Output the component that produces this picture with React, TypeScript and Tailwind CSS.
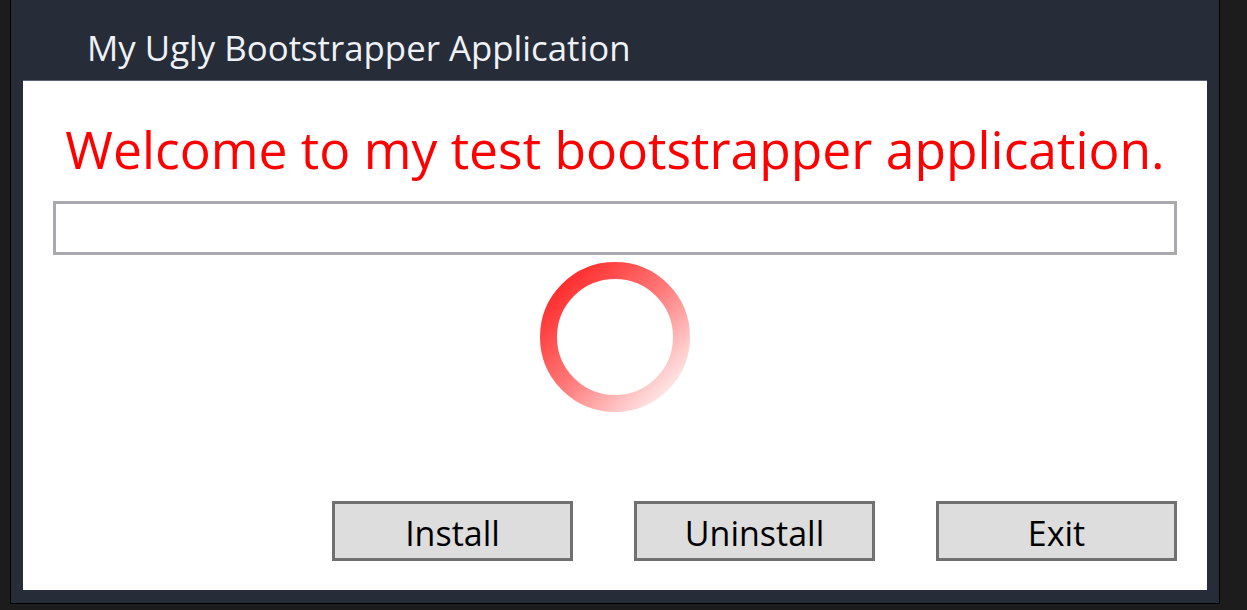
import React from "react";

const FONT = { fontFamily: '"Open Sans", "Noto Sans", sans-serif' };

function Spinner() {
  return (
    <svg width="152" height="152" viewBox="0 0 152 152">
      <defs>
        <linearGradient id="spin" x1="0" y1="0" x2="1" y2="1">
          <stop offset="0" stopColor="#ff1a1a" />
          <stop offset="0.5" stopColor="#ff7a7a" />
          <stop offset="1" stopColor="#ffffff" />
        </linearGradient>
      </defs>
      <circle cx="76" cy="76" r="66.5" fill="none" stroke="url(#spin)" strokeWidth="17" />
    </svg>
  );
}

function Button({ label }: { label: string }) {
  return (
    <button className="w-[241px] h-[60px] border-[3px] border-[#707070] bg-[#dddddd] text-[34px] text-black leading-none pt-[3px]">
      {label}
    </button>
  );
}

export default function App() {
  return (
    <div className="w-[1247px] h-[610px] bg-[#1c1c1c] pl-[10px] overflow-hidden" style={FONT}>
      <div className="w-[1210px] h-[604px] bg-[#262c38] border-x border-b border-black flex flex-col">
        {/* Title bar */}
        <div className="h-[80px] pl-[76px] pt-[28px]">
          <h1 className="text-[34.8px] leading-[40px] text-[#eef2f7]">My Ugly Bootstrapper Application</h1>
        </div>

        {/* Content */}
        <div className="mx-[12px] h-[510px] bg-white border-t border-[#5b6477] flex flex-col items-center">
          <p className="mt-[33px] text-[51.6px] leading-[70px] text-[#ff0000]">
            Welcome to my test bootstrapper application.
          </p>
          <div className="mt-[17px] w-[1124px] h-[54px] border-[3px] border-[#a8a8ae]" />
          <div className="mt-[6px]">
            <Spinner />
          </div>
          <div className="mt-[88px] w-full flex justify-end gap-[61px] pr-[30px]">
            <Button label="Install" />
            <Button label="Uninstall" />
            <Button label="Exit" />
          </div>
        </div>
      </div>
    </div>
  );
}
